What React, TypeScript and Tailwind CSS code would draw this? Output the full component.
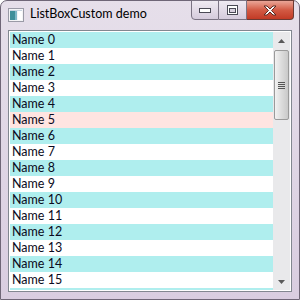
import React from "react";

const names = Array.from({ length: 17 }, (_, i) => `Name ${i}`);

function rowColor(i: number) {
  if (i === 5) return "bg-[#ffe4e1]";
  return i % 2 === 0 ? "bg-[#afeeee]" : "bg-white";
}

function AppIcon() {
  return (
    <svg width="16" height="14" viewBox="0 0 16 14">
      <rect x="0.5" y="0.5" width="15" height="13" fill="#f4f4f6" stroke="#9a9aa6" />
      <rect x="2" y="3" width="5" height="9" fill="#3f8f9a" />
      <rect x="7" y="3" width="2" height="9" fill="#7fb8c8" />
      <rect x="2" y="2" width="12" height="1" fill="#c8d4e0" />
      <rect x="10" y="3" width="4" height="9" fill="#ffffff" />
    </svg>
  );
}

export default function App() {
  return (
    <div
      className="w-[300px] h-[300px] flex flex-col rounded-t-[7px] border border-[#6f6677] bg-gradient-to-b from-[#e6dfea] to-[#d9cde0]"
      style={{ fontFamily: 'Lato, "Noto Sans", sans-serif' }}
    >
      {/* title bar */}
      <div className="h-[29px] flex items-start justify-between shrink-0">
        <div className="flex items-center h-[27px] pl-[7px] gap-[6px]">
          <AppIcon />
          <span className="text-[12.5px] text-black leading-none">ListBoxCustom demo</span>
        </div>
        <div className="flex mr-[5px] -mt-px">
          <div className="w-[28px] h-[20px] border border-[#7a7383] rounded-bl-[4px] bg-gradient-to-b from-[#efeaf2] to-[#d5cbdc] flex items-center justify-center">
            <svg width="12" height="5" viewBox="0 0 12 5">
              <rect x="0.5" y="0.5" width="11" height="4" fill="#fff" stroke="#4a4a55" />
            </svg>
          </div>
          <div className="w-[28px] h-[20px] border border-l-0 border-[#7a7383] bg-gradient-to-b from-[#efeaf2] to-[#d5cbdc] flex items-center justify-center">
            <svg width="11" height="10" viewBox="0 0 11 10">
              <rect x="0.5" y="0.5" width="10" height="9" fill="#fff" stroke="#4a4a55" />
              <rect x="2.5" y="3.5" width="6" height="4" fill="#d8d0de" stroke="#4a4a55" />
            </svg>
          </div>
          <div className="w-[47px] h-[20px] border border-l-0 border-[#6b3a33] rounded-br-[4px] bg-gradient-to-b from-[#e9a597] via-[#d25a44] to-[#c23a25] flex items-center justify-center">
            <svg width="14" height="11" viewBox="0 0 14 11">
              <path
                d="M1 1 L4 1 L7 4 L10 1 L13 1 L8.5 5.5 L13 10 L10 10 L7 7 L4 10 L1 10 L5.5 5.5 Z"
                fill="#fff"
                stroke="#5a2a22"
                strokeWidth="1"
                strokeLinejoin="round"
              />
            </svg>
          </div>
        </div>
      </div>

      {/* client */}
      <div className="flex-1 px-[7px] pb-[7px] min-h-0">
        <div className="h-full border border-[#828790] bg-white p-px flex min-h-0">
          <div className="flex-1 overflow-hidden">
            {names.map((n, i) => (
              <div
                key={n}
                className={`${rowColor(i)} h-[16px] leading-[16px] pl-[2px] text-[12.5px] text-[#0a0a20]`}
              >
                {i < 16 ? n : ""}
              </div>
            ))}
          </div>

          {/* scrollbar */}
          <div className="w-[17px] bg-[#e9e9eb] flex flex-col">
            <div className="h-[17px] flex items-center justify-center">
              <svg width="7" height="4" viewBox="0 0 7 4">
                <path d="M0 4 L3.5 0 L7 4 Z" fill="#5a5a5a" />
              </svg>
            </div>
            <div className="mx-px mt-px h-[70px] rounded-[2px] border border-[#9a9a9a] bg-gradient-to-r from-[#f2f2f2] via-[#dcdcdc] to-[#c9c9c9] flex flex-col items-center justify-center gap-px">
              <div className="w-[7px] h-px bg-[#555]" />
              <div className="w-[7px] h-px bg-[#555]" />
              <div className="w-[7px] h-px bg-[#555]" />
              <div className="w-[7px] h-px bg-[#555]" />
            </div>
            <div className="flex-1" />
            <div className="h-[17px] flex items-center justify-center">
              <svg width="7" height="4" viewBox="0 0 7 4">
                <path d="M0 0 L7 0 L3.5 4 Z" fill="#5a5a5a" />
              </svg>
            </div>
          </div>
        </div>
      </div>
    </div>
  );
}
